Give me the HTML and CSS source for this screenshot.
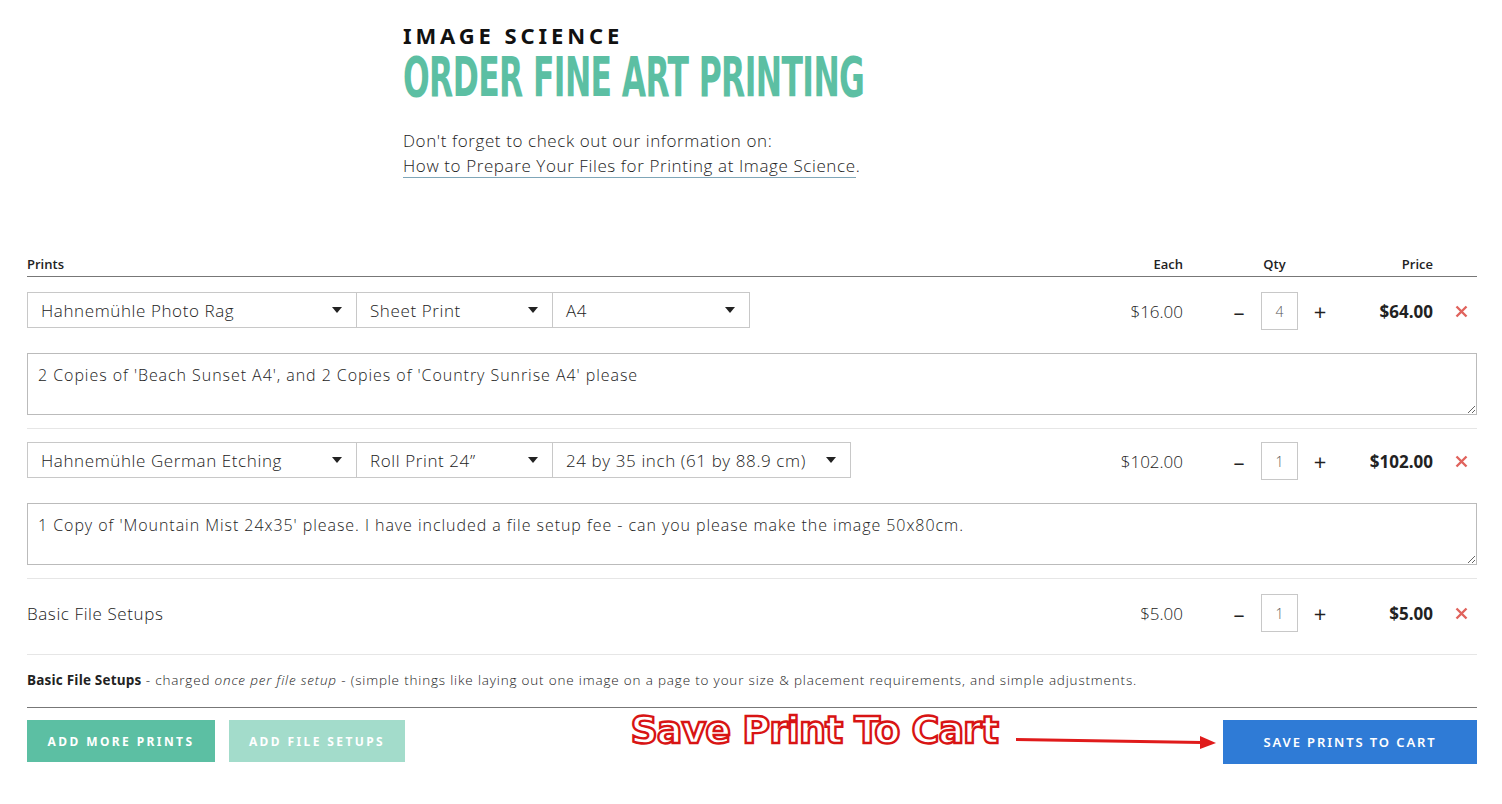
FILE: index.html
```html
<!DOCTYPE html>
<html lang="en">
<head>
    <meta charset="UTF-8">
    <title>Order Fine Art Printing - Image Science</title>
    <link rel="stylesheet" href="styles.css">
</head>
<body>
    <header class="intro">
        <div class="brand">IMAGE SCIENCE</div>
        <h1 class="page-title">ORDER FINE ART PRINTING</h1>
        <p class="intro-text">
            Don't forget to check out our information on:<br>
            <a href="#" class="intro-link">How to Prepare Your Files for Printing at Image Science</a>.
        </p>
    </header>

    <div class="order">
        <div class="row head-row">
            <div>Prints</div>
            <div class="col-each">Each</div>
            <div class="col-qty head-qty">Qty</div>
            <div class="col-price">Price</div>
            <div></div>
        </div>

        <div class="item first">
            <div class="row">
                <div class="selects">
                    <div class="select sel-paper"><span>Hahnemühle Photo Rag</span><i class="caret"></i></div>
                    <div class="select sel-type"><span>Sheet Print</span><i class="caret"></i></div>
                    <div class="select sel-size"><span>A4</span><i class="caret"></i></div>
                </div>
                <div class="col-each">$16.00</div>
                <div class="col-qty">
                    <span class="qty-btn">&ndash;</span>
                    <span class="qty-box">4</span>
                    <span class="qty-btn">+</span>
                </div>
                <div class="col-price">$64.00</div>
                <div class="col-remove"><svg width="13" height="13" viewBox="0 0 13 13"><path d="M1.5 1.5l10 10M11.5 1.5l-10 10" stroke="#e0635d" stroke-width="2.4"/></svg></div>
            </div>
            <textarea class="notes">2 Copies of 'Beach Sunset A4', and 2 Copies of 'Country Sunrise A4' please</textarea>
        </div>

        <div class="item">
            <div class="row">
                <div class="selects">
                    <div class="select sel-paper"><span>Hahnemühle German Etching</span><i class="caret"></i></div>
                    <div class="select sel-type"><span>Roll Print 24”</span><i class="caret"></i></div>
                    <div class="select sel-size wide"><span>24 by 35 inch (61 by 88.9 cm)</span><i class="caret"></i></div>
                </div>
                <div class="col-each">$102.00</div>
                <div class="col-qty">
                    <span class="qty-btn">&ndash;</span>
                    <span class="qty-box">1</span>
                    <span class="qty-btn">+</span>
                </div>
                <div class="col-price">$102.00</div>
                <div class="col-remove"><svg width="13" height="13" viewBox="0 0 13 13"><path d="M1.5 1.5l10 10M11.5 1.5l-10 10" stroke="#e0635d" stroke-width="2.4"/></svg></div>
            </div>
            <textarea class="notes">1 Copy of 'Mountain Mist 24x35' please. I have included a file setup fee - can you please make the image 50x80cm.</textarea>
        </div>

        <div class="item setup-item">
            <div class="row">
                <div class="setup-name">Basic File Setups</div>
                <div class="col-each">$5.00</div>
                <div class="col-qty">
                    <span class="qty-btn">&ndash;</span>
                    <span class="qty-box">1</span>
                    <span class="qty-btn">+</span>
                </div>
                <div class="col-price">$5.00</div>
                <div class="col-remove"><svg width="13" height="13" viewBox="0 0 13 13"><path d="M1.5 1.5l10 10M11.5 1.5l-10 10" stroke="#e0635d" stroke-width="2.4"/></svg></div>
            </div>
        </div>

        <p class="note"><b>Basic File Setups</b> - charged <i>once per file setup</i> - (simple things like laying out one image on a page to your size &amp; placement requirements, and simple adjustments.</p>

        <div class="actions">
            <button class="btn btn-green">ADD MORE PRINTS</button>
            <button class="btn btn-pale">ADD FILE SETUPS</button>
            <div class="save-group">
                <span class="callout">Save Print To Cart</span>
                <svg class="arrow" width="202" height="20" viewBox="0 0 202 20">
                    <path d="M0 7.5 L186 10.5" stroke="#e01b1b" stroke-width="3"/>
                    <path d="M184 4 L200 11 L184 17 Z" fill="#e01b1b"/>
                </svg>
                <button class="btn btn-blue">SAVE PRINTS TO CART</button>
            </div>
        </div>
    </div>
</body>
</html>
```

FILE: styles.css
```css
body {
    margin: 0;
    font-family: "Open Sans", Arial, sans-serif;
    font-weight: 300;
    color: #222;
    background: #fff;
}

/* header */
.intro {
    width: 696px;
    margin: 0 auto;
    padding-top: 22px;
}
.brand {
    font-family: "Noto Sans", Arial, sans-serif;
    font-weight: 700;
    font-size: 22px;
    letter-spacing: 3.9px;
    line-height: 26px;
    color: #111;
}
.page-title {
    margin: 7px 0 0;
    font-family: "DejaVu Sans Condensed", "Liberation Sans Narrow", sans-serif;
    font-weight: 700;
    font-size: 55px;
    line-height: 44px;
    color: #5cbfa3;
    letter-spacing: -1px;
    transform: scaleX(0.636);
    transform-origin: left center;
    white-space: nowrap;
}
.intro-text {
    margin: 29px 0 0;
    font-size: 17px;
    line-height: 25px;
    letter-spacing: 0.6px;
}
.intro-link {
    color: #222;
    text-decoration: none;
    border-bottom: 1px solid #7fa6b8;
}

/* order table */
.order {
    padding: 0 25px 0 27px;
    margin-top: 72px;
}
.row {
    display: grid;
    grid-template-columns: 1fr 120px 150px 100px 44px;
    align-items: center;
}
.head-row {
    font-size: 13px;
    font-weight: 600;
    height: 21px;
    padding-top: 5px;
    align-items: start;
    border-bottom: 1px solid #777;
}
.col-each {
    text-align: right;
    font-size: 17px;
}
.head-row .col-each,
.head-row .col-price {
    font-size: 13px;
    font-weight: 600;
}
.col-qty {
    display: flex;
    align-items: center;
    justify-content: flex-end;
    padding-right: 1px;
}
.head-qty {
    justify-content: center;
    padding-left: 33px;
    padding-right: 0;
}
.col-price {
    text-align: right;
    font-size: 17px;
    font-weight: 700;
}
.col-remove {
    text-align: right;
    padding-right: 9px;
    line-height: 0;
}

.item {
    padding: 13px 0;
    border-bottom: 1px solid #e6e6e6;
}
.item.first {
    padding-top: 15px;
}
.selects {
    display: flex;
    align-self: start;
}
.select {
    display: flex;
    align-items: center;
    justify-content: space-between;
    height: 36px;
    padding: 0 14px 0 13px;
    border: 1px solid #c8c8c8;
    margin-right: -1px;
    font-size: 17px;
    letter-spacing: 0.6px;
    box-sizing: border-box;
}
.sel-paper { width: 330px; }
.sel-type { width: 197px; }
.sel-size { width: 198px; }
.sel-size.wide { width: 299px; }
.caret {
    width: 0;
    height: 0;
    border-left: 5px solid transparent;
    border-right: 5px solid transparent;
    border-top: 6px solid #222;
}

.qty-btn {
    width: 24px;
    text-align: center;
    font-size: 22px;
    font-weight: 400;
}
.qty-box {
    width: 37px;
    height: 38px;
    margin: 0 10px;
    border: 1px solid #c8c8c8;
    box-sizing: border-box;
    display: flex;
    align-items: center;
    justify-content: center;
    font-size: 14px;
    color: #555;
}

.notes {
    display: block;
    width: 100%;
    height: 62px;
    margin-top: 23px;
    padding: 10px 10px;
    box-sizing: border-box;
    border: 1px solid #bbb;
    font-family: "Open Sans", Arial, sans-serif;
    font-weight: 300;
    font-size: 16px;
    letter-spacing: 0.95px;
    color: #222;
}

.setup-item {
    padding: 15px 0 22px;
}
.setup-name {
    font-size: 17px;
    letter-spacing: 0.6px;
}

.note {
    margin: 0;
    padding: 16px 0 18px;
    font-size: 13.5px;
    line-height: 18px;
    letter-spacing: 0.82px;
    border-bottom: 1px solid #777;
}
.note b { font-weight: 700; letter-spacing: 0.2px; }

/* buttons */
.actions {
    display: flex;
    align-items: flex-start;
    gap: 14px;
    padding-top: 12px;
}
.btn {
    border: none;
    color: #fff;
    font-family: "Noto Sans", Arial, sans-serif;
    font-weight: 700;
    font-size: 12px;
    letter-spacing: 2.4px;
    height: 42px;
    padding: 0 8px;
    white-space: nowrap;
    cursor: pointer;
}
.btn-green { background: #5cbfa3; width: 188px; }
.btn-pale { background: #a3dccb; width: 176px; }
.btn-blue {
    background: #2f7bd6;
    width: 254px;
    height: 44px;
    font-weight: 600;
    font-size: 13px;
    letter-spacing: 1.9px;
}
.save-group {
    margin-left: auto;
    display: flex;
    align-items: center;
}
.callout {
    font-family: "DejaVu Sans", Arial, sans-serif;
    font-weight: 700;
    font-size: 38px;
    color: #fff;
    -webkit-text-stroke: 2.4px #d81414;
    letter-spacing: -1px;
    margin-top: -24px;
}
.arrow {
    margin: 0 5px 0 18px;
}
```
